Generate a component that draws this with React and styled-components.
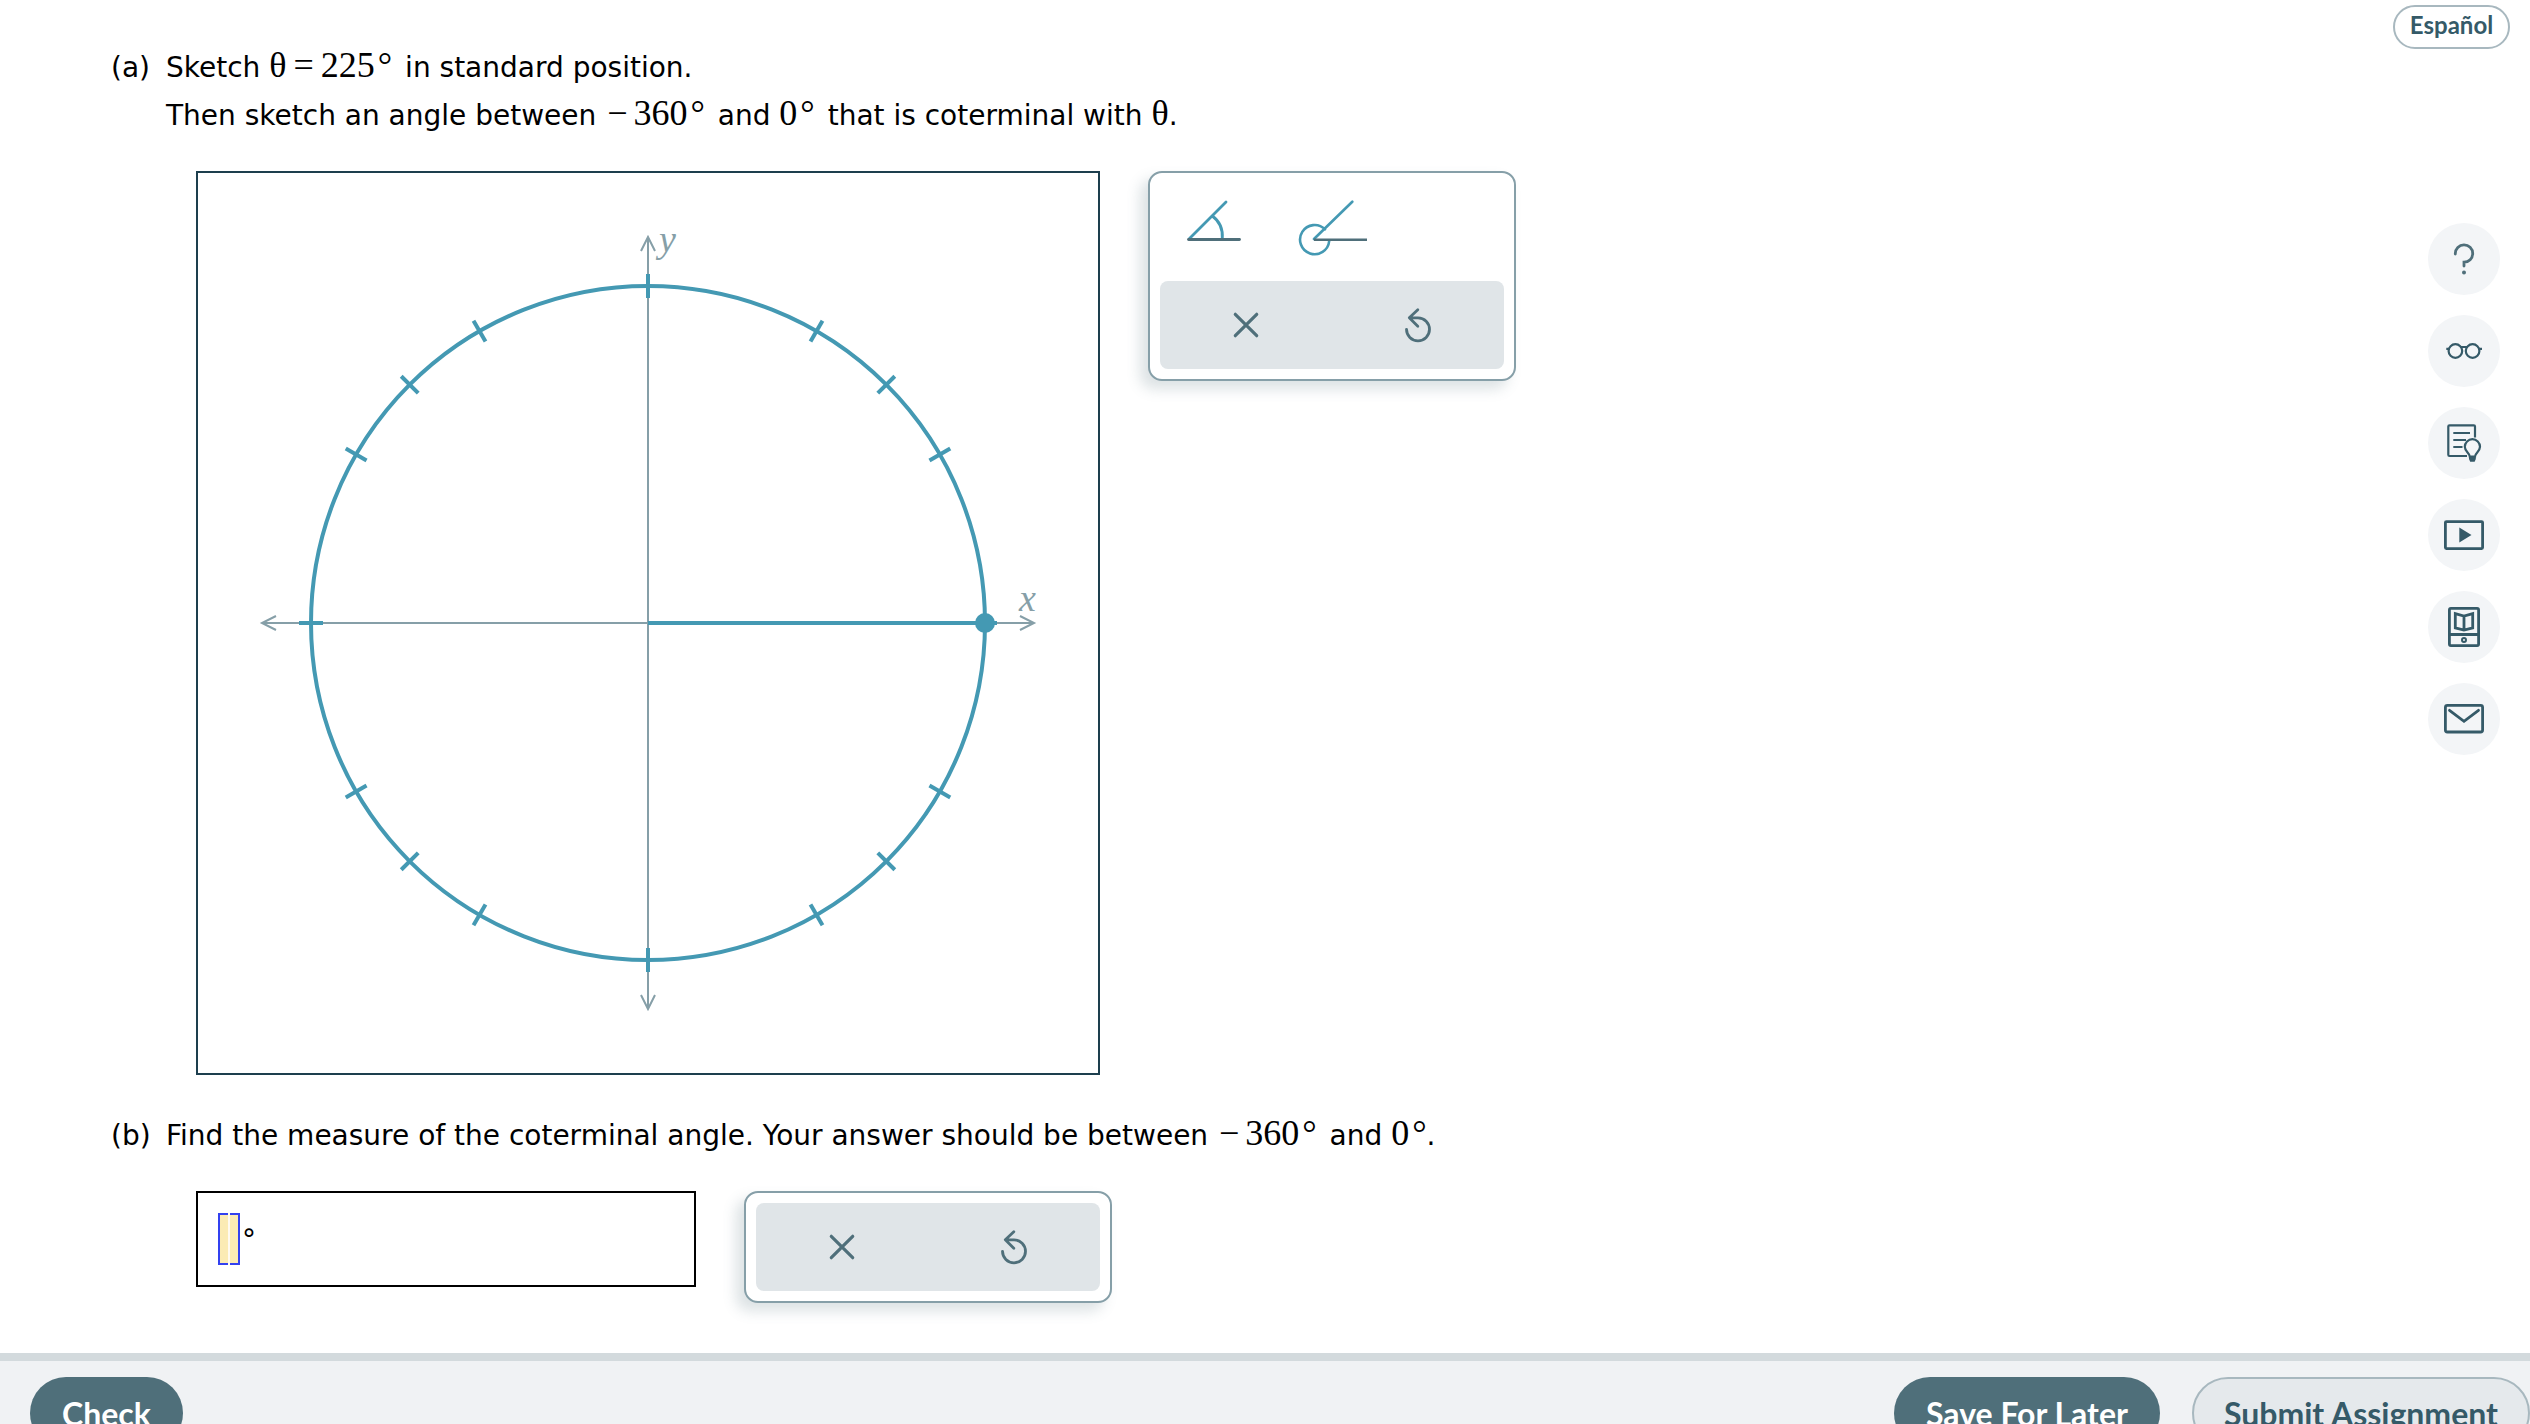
import React, { useState } from "react";
import styled, { createGlobalStyle } from "styled-components";

const GlobalStyle = createGlobalStyle`
    *, *::before, *::after {
        box-sizing: border-box;
    }

    body {
        margin: 0;
        background: #ffffff;
    }

    button, input {
        font: inherit;
        color: inherit;
        margin: 0;
        padding: 0;
        border: 0;
        background: none;
    }

    button {
        cursor: pointer;
    }
`;

const Page = styled.div`
    display: flex;
    flex-direction: column;
    height: 100vh;
    overflow: hidden;
    font-family: Verdana, "DejaVu Sans", sans-serif;
    font-size: 28px;
    color: #000000;
`;

const Main = styled.main`
    display: flex;
    flex: none;
`;

const Problem = styled.div`
    flex: 1;
    min-width: 0;
    padding: 44px 0 50px 111px;
`;

const Part = styled.section`
    display: grid;
    grid-template-columns: 55px minmax(0, 1fr);
    margin-bottom: ${props => props.$last ? "0" : "37px"};
`;

const Line = styled.p`
    margin: 0;
    line-height: 48px;
`;

const MathText = styled.span`
    font-family: "Liberation Serif", "Times New Roman", serif;
    font-size: 36px;
    line-height: 1;
    margin-right: ${props => props.$tight ? "0" : "4px"};
`;

const Equals = styled.span`
    margin: 0 7px;
`;

const Minus = styled.span`
    margin: 0 6px 0 2px;
`;

const Degree = styled.span`
    margin-left: 3px;
`;

const Row = styled.div`
    display: flex;
    align-items: flex-start;
    gap: 48px;
    margin: 31px 0 0 30px;
`;

const Graph = styled.svg`
    flex: 0 1 904px;
    min-width: 0;
    aspect-ratio: 1;
    border: 2px solid #1d3f4e;
`;

const AxisLabel = styled.text`
    font-family: "Liberation Serif", "Times New Roman", serif;
    font-style: italic;
    font-size: 38px;
    fill: #869fa8;
`;

const Panel = styled.div`
    flex: 0 0 368px;
    padding: 10px;
    border: 2px solid #869fa8;
    border-radius: 14px;
    background: #ffffff;
    box-shadow: -8px 8px 14px rgba(79, 110, 122, 0.2);
`;

const Tools = styled.div`
    display: flex;
    gap: 10px;
`;

const ToolButton = styled.button`
    width: 108px;
    height: 98px;

    svg {
        display: block;
    }
`;

const ActionBar = styled.div`
    display: flex;
    height: 88px;
    border-radius: 8px;
    background: #e0e5e8;
`;

const ActionButton = styled.button`
    flex: 1;
    display: flex;
    align-items: center;
    justify-content: center;
`;

const AnswerBox = styled.label`
    display: flex;
    align-items: center;
    gap: 2px;
    flex: 0 1 500px;
    height: 96px;
    padding: 0 20px;
    border: 2px solid #000000;
`;

const AnswerCell = styled.span`
    position: relative;
    width: 22px;
    height: 52px;

    &::after {
        content: "";
        position: absolute;
        top: 0;
        bottom: 0;
        left: 10px;
        width: 2px;
        background: #fffaf0;
        pointer-events: none;
    }
`;

const AnswerInput = styled.input`
    display: block;
    width: 100%;
    height: 100%;
    border: 2px solid #3341f0;
    background: #fbebb4;
    outline: none;
`;

const Aside = styled.aside`
    display: flex;
    flex-direction: column;
    align-items: flex-end;
    padding: 5px 20px 0 0;
`;

const LanguageButton = styled.button`
    width: 117px;
    height: 44px;
    padding-bottom: 4px;
    border: 2px solid #a8b8bf;
    border-radius: 22px;
    font-family: Lato, sans-serif;
    font-size: 24px;
    font-weight: 700;
    line-height: 1;
    color: #355a68;
`;

const SideNav = styled.nav`
    display: flex;
    flex-direction: column;
    gap: 20px;
    margin: 174px 10px 0 0;
`;

const SideButton = styled.button`
    width: 72px;
    height: 72px;
    border-radius: 50%;
    background: #f3f5f7;

    svg {
        display: block;
    }
`;

const Footer = styled.footer`
    display: flex;
    flex: none;
    gap: 32px;
    padding: 16px 0 16px 30px;
    border-top: 8px solid #d3dadd;
    background: #f0f2f4;
`;

const FooterButton = styled.button`
    height: 72px;
    padding: 0 ${props => props.$outline ? "30px" : "32px"};
    border: ${props => props.$outline ? "2px solid #a8b8bf" : "0"};
    border-radius: 36px;
    font-family: Lato, sans-serif;
    font-size: 32px;
    font-weight: 700;
    color: ${props => props.$outline ? "#355a68" : "#ffffff"};
    background: ${props => props.$outline ? "#e5e9ec" : "#4f6f7a"};
    margin-left: ${props => props.$push ? "auto" : "0"};
`;

const TICKS = [0, 30, 45, 60, 90, 120, 135, 150, 180, 210, 225, 240, 270, 300, 315, 330];

const UnitCircle = () => (
    <Graph viewBox="0 0 900 900" role="img" aria-label="Circle with x and y axes">
        <g fill="none" stroke="#869fa8" strokeWidth="2">
            <path d="M64 450H836M450 64V836" />
            <path d="M78 443L64 450L78 457M822 443L836 450L822 457M443 78L450 64L457 78M443 822L450 836L457 822" />
        </g>
        <g fill="none" stroke="#4499b3" strokeWidth="4">
            <circle cx="450" cy="450" r="337" />
            {TICKS.map(angle => (
                <path key={angle} d="M775 450H799" transform={`rotate(${-angle} 450 450)`} />
            ))}
            <path d="M450 450H787" />
        </g>
        <circle cx="787" cy="450" r="10" fill="#4499b3" />
        <AxisLabel x="461" y="79">y</AxisLabel>
        <AxisLabel x="821" y="438">x</AxisLabel>
    </Graph>
);

const AngleIcon = () => (
    <svg width="108" height="98" fill="none" strokeWidth="2.8" strokeLinecap="round">
        <path d="M29.5 55.5L66 19M52.3 33Q63.5 41 62.3 56" stroke="#4499b3" />
        <path d="M28.5 56.5H79.5" stroke="#4f6f7a" />
    </svg>
);

const ReflexAngleIcon = () => (
    <svg width="108" height="98" fill="none" strokeWidth="2.6" strokeLinecap="round">
        <path d="M36 56L74.3 18.7M47 46.3A14.6 14.6 0 1 0 51.2 58" stroke="#4499b3" />
        <path d="M36 56.7H89" stroke="#4f6f7a" strokeLinecap="butt" />
    </svg>
);

const Actions = () => (
    <ActionBar>
        <ActionButton type="button" aria-label="Clear">
            <svg width="40" height="40" fill="none" stroke="#4f6f7a" strokeWidth="3.2" strokeLinecap="round">
                <path d="M9.3 9.3L30.7 30.7M30.7 9.3L9.3 30.7" />
            </svg>
        </ActionButton>
        <ActionButton type="button" aria-label="Reset">
            <svg width="40" height="40" fill="none" stroke="#4f6f7a" strokeWidth="2.8" strokeLinecap="round" strokeLinejoin="round">
                <path d="M8.5 24.3A11.5 11.5 0 1 0 20 12.8H11.3M19.8 4.7L11.3 12.8L19.8 21.2" />
            </svg>
        </ActionButton>
    </ActionBar>
);

const SIDE_ITEMS = [
    {
        label: "Help",
        icon: (
            <g stroke="#4f6f7a" strokeWidth="2.8" strokeLinecap="round">
                <path d="M27.3 31V30.6A8.7 8.7 0 1 1 36 39.2V43" />
                <circle cx="36" cy="49.6" r="2" fill="#4f6f7a" stroke="none" />
            </g>
        ),
    },
    {
        label: "Reading view",
        icon: (
            <g strokeWidth="2.2">
                <circle cx="27.4" cy="36" r="6.8" />
                <circle cx="44.6" cy="36" r="6.8" />
                <path d="M32 32H40M18.3 33.8H21M51 33.8H54" />
            </g>
        ),
    },
    {
        label: "Explanation",
        icon: (
            <g strokeWidth="2.2">
                <path d="M39 49H21.5Q20.3 49 20.3 47.8V19.5Q20.3 18.3 21.5 18.3H45.8Q47 18.3 47 19.5V30.5M25.3 26H42M25.3 33H38M25.3 40H34.5" />
                <path d="M41.8 49.5C41.8 46 36.8 44.5 36.8 39.8A7.6 7.6 0 0 1 52 39.8C52 44.5 47 46 47 49.5Z" />
                <path d="M41 49H47.8V52L46.6 54.7H42.2L41 52Z" fill="#355a68" stroke="none" />
            </g>
        ),
    },
    {
        label: "Video",
        icon: (
            <g strokeWidth="2.8">
                <rect x="17.4" y="22.6" width="37.2" height="27" rx="1" />
                <path d="M31.3 28.5L43.5 36L31.3 43.5Z" fill="#355a68" stroke="none" />
            </g>
        ),
    },
    {
        label: "Textbook",
        icon: (
            <g strokeWidth="2.8">
                <rect x="21.4" y="17.4" width="29.2" height="37.2" rx="1.5" />
                <path d="M21.4 43.5H50.6M27.3 22.6L36 25L44.7 22.6V36.8L36 39L27.3 36.8ZM36 25V39" />
                <circle cx="36" cy="49" r="2" strokeWidth="2" />
            </g>
        ),
    },
    {
        label: "Message",
        icon: (
            <g strokeWidth="2.8">
                <rect x="17.4" y="22.4" width="37.2" height="26.6" rx="2" />
                <path d="M21.5 27.3L36 38.3L50.5 27.3" strokeLinecap="round" />
            </g>
        ),
    },
];

const App = () => {
    const [answer, setAnswer] = useState("");

    return (
        <>
            <GlobalStyle />
            <Page>
                <Main>
                    <Problem>
                        <Part>
                            <Line>(a)</Line>
                            <div>
                                <Line>
                                    Sketch <MathText>θ<Equals>=</Equals>225<Degree>°</Degree></MathText> in standard position.
                                </Line>
                                <Line>
                                    Then sketch an angle between <MathText><Minus>−</Minus>360<Degree>°</Degree></MathText> and <MathText>0<Degree>°</Degree></MathText> that is coterminal with <MathText $tight>θ</MathText>.
                                </Line>
                                <Row>
                                    <UnitCircle />
                                    <Panel>
                                        <Tools>
                                            <ToolButton type="button" aria-label="Draw angle">
                                                <AngleIcon />
                                            </ToolButton>
                                            <ToolButton type="button" aria-label="Draw reflex angle">
                                                <ReflexAngleIcon />
                                            </ToolButton>
                                        </Tools>
                                        <Actions />
                                    </Panel>
                                </Row>
                            </div>
                        </Part>
                        <Part $last>
                            <Line>(b)</Line>
                            <div>
                                <Line>
                                    Find the measure of the coterminal angle. Your answer should be between <MathText><Minus>−</Minus>360<Degree>°</Degree></MathText> and <MathText $tight>0<Degree>°</Degree></MathText>.
                                </Line>
                                <Row>
                                    <AnswerBox>
                                        <AnswerCell>
                                            <AnswerInput
                                                aria-label="Angle in degrees"
                                                value={answer}
                                                onChange={e => setAnswer(e.target.value)}
                                            />
                                        </AnswerCell>
                                        <span>°</span>
                                    </AnswerBox>
                                    <Panel>
                                        <Actions />
                                    </Panel>
                                </Row>
                            </div>
                        </Part>
                    </Problem>
                    <Aside>
                        <LanguageButton type="button">Español</LanguageButton>
                        <SideNav>
                            {SIDE_ITEMS.map(item => (
                                <SideButton key={item.label} type="button" aria-label={item.label}>
                                    <svg width="72" height="72" fill="none" stroke="#355a68">
                                        {item.icon}
                                    </svg>
                                </SideButton>
                            ))}
                        </SideNav>
                    </Aside>
                </Main>
                <Footer>
                    <FooterButton type="button">Check</FooterButton>
                    <FooterButton type="button" $push>Save For Later</FooterButton>
                    <FooterButton type="button" $outline>Submit Assignment</FooterButton>
                </Footer>
            </Page>
        </>
    );
};

export default App;
